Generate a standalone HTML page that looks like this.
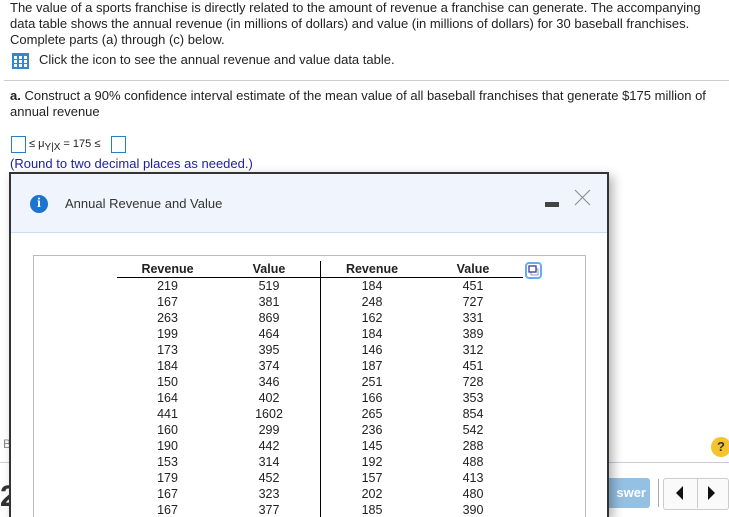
<!DOCTYPE html>
<html style="width:729px;height:517px;overflow:hidden"><head><style>
body{margin:0;width:729px;height:517px;overflow:hidden;background:#fff;font-family:"Liberation Sans",Arial,sans-serif;font-size:13px;color:#222;position:relative}
.a{position:absolute;white-space:nowrap}
.box{position:absolute;width:13px;height:15px;border:1px solid #2a7fc4;background:#fff}
td{padding:0;text-align:center;height:16px;font-size:12.5px;line-height:16px}
</style></head><body>
<div class="a" style="left:10px;top:0;line-height:16px">The value of a sports franchise is directly related to the amount of revenue a franchise can generate. The accompanying<br>data table shows the annual revenue (in millions of dollars) and value (in millions of dollars) for 30 baseball franchises.<br>Complete parts (a) through (c) below.</div>
<svg class="a" style="left:12px;top:53px" width="17" height="16"><rect width="17" height="16" fill="#2a8ad8"/><g fill="#fff"><rect x="2" y="3" width="3" height="3"/><rect x="7" y="3" width="3" height="3"/><rect x="12" y="3" width="3" height="3"/><rect x="2" y="7" width="3" height="3"/><rect x="7" y="7" width="3" height="3"/><rect x="12" y="7" width="3" height="3"/><rect x="2" y="11" width="3" height="3"/><rect x="7" y="11" width="3" height="3"/><rect x="12" y="11" width="3" height="3"/></g></svg>
<div class="a" style="left:39px;top:52px;line-height:16px">Click the icon to see the annual revenue and value data table.</div>
<div class="a" style="left:4px;top:80px;width:725px;height:1px;background:#ccc"></div>
<div class="a" style="left:10px;top:88px;line-height:16px"><b>a.</b> Construct a 90% confidence interval estimate of the mean value of all baseball franchises that generate $175 million of<br>annual revenue</div>
<div class="box" style="left:11px;top:136px"></div>
<div class="a" style="left:29px;top:138px;font-size:11px">≤ μ<sub style="font-size:10px">Y|X</sub> = 175 ≤</div>
<div class="box" style="left:111px;top:136px"></div>
<div class="a" style="left:10px;top:156px;color:#1e1ea0;line-height:16px">(Round to two decimal places as needed.)</div>

<div class="a" style="left:3px;top:437px;color:#888;font-size:12px">B</div>
<div class="a" style="left:0;top:462px;width:729px;height:1px;background:#ccd"></div>
<div class="a" style="left:711px;top:437px;width:20px;height:20px;border-radius:50%;background:#f4c430;text-align:center;font-weight:bold;line-height:20px;color:#333">?</div>
<div class="a" style="left:0;top:482px;font-size:30px;line-height:30px;height:30px;font-weight:bold;color:#333">2</div>
<div class="a" style="left:595px;top:478px;width:55px;height:30px;background:#94c0e4;border-radius:3px;color:#fff;font-weight:bold;line-height:30px;text-align:right;padding-right:4px;box-sizing:border-box">swer</div>
<div class="a" style="left:658px;top:479px;width:1px;height:28px;background:#aaa"></div>
<div class="a" style="left:663px;top:478px;width:64px;height:30px;border:1px solid #ccc;border-radius:3px;background:#fafafa"></div>
<div class="a" style="left:697px;top:478px;width:1px;height:30px;background:#ccc"></div>
<svg class="a" style="left:674px;top:486px" width="50" height="14"><path d="M9 0L2 7L9 14Z" fill="#111"/><path d="M34 0L41 7L34 14Z" fill="#111"/></svg>

<div class="a" style="left:9px;top:172px;width:596px;height:343px;border:2px solid #333;border-bottom:none;background:#fff;box-shadow:4px 4px 10px rgba(0,0,0,.3);overflow:hidden">
 <div style="height:58px;background:#f0f5fd;border-bottom:1px solid #c5dff5;position:relative">
  <div class="a" style="left:19px;top:21px;width:18px;height:18px;border-radius:50%;background:#1a74d0;color:#fff;font-weight:bold;text-align:center;line-height:18px;font-family:'Liberation Serif',serif;font-size:14px">i</div>
  <div class="a" style="left:54px;top:22px;font-size:13px;color:#333">Annual Revenue and Value</div>
  <div class="a" style="left:534px;top:28px;width:14px;height:5px;background:#444"></div>
  <svg class="a" style="left:563px;top:15px" width="17" height="17"><path d="M1 1L16 16M16 1L1 16" stroke="#888" stroke-width="1"/></svg>
 </div>
 <div class="a" style="left:22px;top:81px;width:551px;height:270px;border:1px solid #bbb"></div>
 <table class="a" style="left:106px;top:87px;border-collapse:collapse">
  <tr style="font-weight:bold"><td style="width:101px;border-bottom:1px solid #000">Revenue</td><td style="width:102px;border-bottom:1px solid #000;border-right:1px solid #000">Value</td><td style="width:102px;border-bottom:1px solid #000">Revenue</td><td style="width:100px;border-bottom:1px solid #000">Value</td></tr>
  <tr><td>219</td><td style="border-right:1px solid #000">519</td><td>184</td><td>451</td></tr>
  <tr><td>167</td><td style="border-right:1px solid #000">381</td><td>248</td><td>727</td></tr>
  <tr><td>263</td><td style="border-right:1px solid #000">869</td><td>162</td><td>331</td></tr>
  <tr><td>199</td><td style="border-right:1px solid #000">464</td><td>184</td><td>389</td></tr>
  <tr><td>173</td><td style="border-right:1px solid #000">395</td><td>146</td><td>312</td></tr>
  <tr><td>184</td><td style="border-right:1px solid #000">374</td><td>187</td><td>451</td></tr>
  <tr><td>150</td><td style="border-right:1px solid #000">346</td><td>251</td><td>728</td></tr>
  <tr><td>164</td><td style="border-right:1px solid #000">402</td><td>166</td><td>353</td></tr>
  <tr><td>441</td><td style="border-right:1px solid #000">1602</td><td>265</td><td>854</td></tr>
  <tr><td>160</td><td style="border-right:1px solid #000">299</td><td>236</td><td>542</td></tr>
  <tr><td>190</td><td style="border-right:1px solid #000">442</td><td>145</td><td>288</td></tr>
  <tr><td>153</td><td style="border-right:1px solid #000">314</td><td>192</td><td>488</td></tr>
  <tr><td>179</td><td style="border-right:1px solid #000">452</td><td>157</td><td>413</td></tr>
  <tr><td>167</td><td style="border-right:1px solid #000">323</td><td>202</td><td>480</td></tr>
  <tr><td>167</td><td style="border-right:1px solid #000">377</td><td>185</td><td>390</td></tr>
 </table>
 <svg class="a" style="left:514px;top:88px" width="17" height="17"><rect x="1" y="1" width="15" height="15" rx="3" fill="#fff" stroke="#6aaaf0" stroke-width="2"/><rect x="6" y="7" width="7" height="6" fill="#fff" stroke="#9999cc"/><rect x="4" y="4" width="7" height="6" fill="#fff" stroke="#3a3a9a" stroke-width="1.3"/></svg>
</div>
</body></html>
